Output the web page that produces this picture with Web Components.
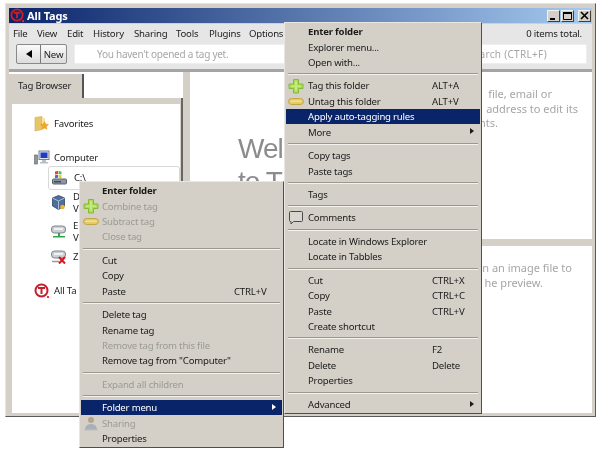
<!DOCTYPE html>
<html>
<head>
<meta charset="utf-8">
<title>All Tags</title>
<style>
html, body { margin: 0; height: 100%; background: #fff; overflow: hidden; }
body { font: 9.6px "Noto Sans", "Liberation Sans", sans-serif; letter-spacing: -.2px; color: #111; position: relative; padding: 3px 0 0 5px; box-sizing: border-box; filter: blur(.45px); }
</style>
</head>
<body>

<app-window heading="All Tags" status="0 items total.">
  <tag-browser slot="left">
    <tree-row icon="folder" label="Favorites" style="margin-top:12px"></tree-row>
    <tree-row icon="computer" label="Computer" style="margin-top:18px"></tree-row>
    <tree-row icon="drive" label="C:\" selected indent></tree-row>
    <tree-row icon="cube" label="D" sub="V" indent></tree-row>
    <tree-row icon="netdrive" label="E" sub="V" indent style="margin-top:3px"></tree-row>
    <tree-row icon="netdown" label="Z" indent style="margin-top:4px"></tree-row>
    <tree-row icon="logo" label="All Ta" style="margin-top:18px"></tree-row>
  </tag-browser>
  <welcome-pane slot="right"></welcome-pane>
</app-window>

<ctx-menu style="left:284px;top:22px;--gutter:22px;width:198px">
  <menu-row label="Enter folder" bold></menu-row>
  <menu-row label="Explorer menu..."></menu-row>
  <menu-row label="Open with..."></menu-row>
  <menu-sep></menu-sep>
  <menu-row label="Tag this folder" key="ALT+A" icon="plus"></menu-row>
  <menu-row label="Untag this folder" key="ALT+V" icon="minus"></menu-row>
  <menu-row label="Apply auto-tagging rules" active></menu-row>
  <menu-row label="More" arrow></menu-row>
  <menu-sep></menu-sep>
  <menu-row label="Copy tags"></menu-row>
  <menu-row label="Paste tags"></menu-row>
  <menu-sep></menu-sep>
  <menu-row label="Tags"></menu-row>
  <menu-sep></menu-sep>
  <menu-row label="Comments" icon="bubble"></menu-row>
  <menu-sep></menu-sep>
  <menu-row label="Locate in Windows Explorer"></menu-row>
  <menu-row label="Locate in Tabbles"></menu-row>
  <menu-sep></menu-sep>
  <menu-row label="Cut" key="CTRL+X"></menu-row>
  <menu-row label="Copy" key="CTRL+C"></menu-row>
  <menu-row label="Paste" key="CTRL+V"></menu-row>
  <menu-row label="Create shortcut"></menu-row>
  <menu-sep></menu-sep>
  <menu-row label="Rename" key="F2"></menu-row>
  <menu-row label="Delete" key="Delete"></menu-row>
  <menu-row label="Properties"></menu-row>
  <menu-sep></menu-sep>
  <menu-row label="Advanced" arrow></menu-row>
</ctx-menu>

<ctx-menu style="left:79px;top:181px;--gutter:21px;width:205px">
  <menu-row label="Enter folder" bold></menu-row>
  <menu-row label="Combine tag" icon="plus" disabled></menu-row>
  <menu-row label="Subtract tag" icon="minus" disabled></menu-row>
  <menu-row label="Close tag" disabled></menu-row>
  <menu-sep></menu-sep>
  <menu-row label="Cut"></menu-row>
  <menu-row label="Copy"></menu-row>
  <menu-row label="Paste" key="CTRL+V"></menu-row>
  <menu-sep></menu-sep>
  <menu-row label="Delete tag"></menu-row>
  <menu-row label="Rename tag"></menu-row>
  <menu-row label="Remove tag from this file" disabled></menu-row>
  <menu-row label="Remove tag from &quot;Computer&quot;"></menu-row>
  <menu-sep></menu-sep>
  <menu-row label="Expand all children" disabled></menu-row>
  <menu-sep></menu-sep>
  <menu-row label="Folder menu" active arrow></menu-row>
  <menu-row label="Sharing" icon="person" disabled></menu-row>
  <menu-row label="Properties"></menu-row>
</ctx-menu>

<script>
const ICONS = {
    logo: `<circle cx="7.5" cy="7.5" r="6" fill="none" stroke="#c3202c" stroke-width="2"/><path d="M4 5h7M7.5 5v6" stroke="#c3202c" stroke-width="2" fill="none"/><rect x="13" y="13" width="2" height="2" fill="#e33"/>`,
    plus: `<path d="M5.5 1.5h5v4.5h4.5v4.5h-4.500v4.500h-5v-4.500h-4.500v-4.500h4.500z" fill="#a9dc55" stroke="#86b83c" stroke-linejoin="round"/><path d="M7 3h2v4.500h4v1.500h-4v4h-2v-4h-4v-1.500h4z" fill="#c4ea7c"/>`,
    minus: `<rect x=".5" y="4.500" width="15" height="6" rx="3" fill="#e3cb68" stroke="#c2a545"/><rect x="2.500" y="6.500" width="11" height="1.500" fill="#f0df94"/>`,
    bubble: `<path d="M2.500 1.500h11a1 1 0 0 1 1 1v8a1 1 0 0 1-1 1h-8l-2.500 2.500v-2.500h-.5a1 1 0 0 1-1-1v-8a1 1 0 0 1 1-1z" fill="#d9d6cf" stroke="#4a4a4a"/>`,
    person: `<circle cx="8" cy="5" r="3" fill="#a08a62"/><path d="M2 15c0-4 2.500-6 6-6s6 2 6 6z" fill="#8f9cae"/><path d="M1 15h14" stroke="#b5b5b5"/>`,
    folder: `<path d="M1 1.500l7-1v13l-7 1.500z" fill="#e8c667" stroke="#c9a850" stroke-width=".6"/><path d="M8 2h3v11h-3z" fill="#f4e2a6"/><path d="M10.500 5.500l1.200 2.700 2.800.3-2.100 1.900.6 2.900-2.500-1.500-2.500 1.500.6-2.900-2.100-1.900 2.800-.3z" fill="#f5a623" stroke="#d88a14" stroke-width=".4"/>`,
    computer: `<rect x="5" y="1" width="10" height="8.500" fill="#dfe3ea" stroke="#7c828c"/><rect x="6.500" y="2.500" width="7" height="5.500" fill="#1a3fc4"/><path d="M8 10h4v2h2v1.500h-8v-1.500h2z" fill="#b9bdc4"/><rect x=".5" y="5" width="3" height="9" fill="#8f959c" stroke="#5e646a" stroke-width=".6"/>`,
    drive: `<path d="M3 1.500l3-.5v3l-3 .5z" fill="#e8432e"/><path d="M6.500 1l3 .5v3l-3-.5z" fill="#6ab53c"/><path d="M3 5.200l3-.5v3l-3 .5z" fill="#2f78d6"/><path d="M6.500 4.700l3 .5v3l-3-.5z" fill="#f3c32d"/><rect x=".5" y="9" width="14" height="5" rx="1" fill="#8c96a0" stroke="#5b6570"/><rect x="2" y="11" width="7" height="1.500" fill="#3f4a55"/>`,
    cube: `<path d="M7.500 .5l6 2.500v8l-6 3.500-6-3.500v-8z" fill="#4f6f98" stroke="#2f4564" stroke-width=".8"/><path d="M1.500 3l6 3 6-3M7.500 6v8.500" stroke="#a9bdd6" fill="none"/><circle cx="11.500" cy="12" r="2.300" fill="#f3b52c"/>`,
    netdrive: `<rect x=".5" y="2" width="14" height="7" rx="3" fill="#ccd0d4" stroke="#7e8388"/><rect x="3" y="4" width="9" height="2" fill="#eef0f2"/><path d="M7 9h2v3h5v1.500h-12v-1.500h5z" fill="#2aa84a"/>`,
    netdown: `<rect x=".5" y="2" width="14" height="7" rx="3" fill="#ccd0d4" stroke="#7e8388"/><rect x="3" y="4" width="9" height="2" fill="#eef0f2"/><path d="M1 12.500h7" stroke="#9a9a9a" stroke-width="1.500"/><path d="M8 8l6 6.500M14 8l-6 6.500" stroke="#d8141c" stroke-width="2"/>`
}

class TbIcon extends HTMLElement{
    connectedCallback(){
        const name = this.getAttribute("name")
        const size = this.getAttribute("size") || 16
        this.attachShadow({mode: "open"}).innerHTML = `
            <style>
            :host{ display: inline-flex; width: ${size}px; height: ${size}px; flex: none; }
            svg{ display: block; }
            </style>
            <svg width="${size}" height="${size}" viewBox="0 0 16 16">${ICONS[name] || ""}</svg>`
    }
}
customElements.define("tb-icon", TbIcon)

class AppWindow extends HTMLElement{
    connectedCallback(){
        const heading = this.getAttribute("heading")
        const status = this.getAttribute("status")
        const items = [["File", 24], ["View", 30], ["Edit", 26], ["History", 41], ["Sharing", 42], ["Tools", 33], ["Plugins", 40], ["Options", 40]]
        this.attachShadow({mode: "open"}).innerHTML = `
            <style>
            :host{
                display: flex; flex-direction: column; box-sizing: border-box;
                width: 591px; height: 414px; padding: 4px 3px 3px 3px;
                background: #d4d0c8;
                border: 1px solid #e6e4de; border-right-color: #5a5a5a; border-bottom-color: #5a5a5a;
            }
            .title{
                height: 15px; flex: none; display: flex; align-items: center; gap: 2px; padding-left: 1px;
                background: linear-gradient(90deg, #0a246a, #a6caf0);
                color: #fff; font-weight: bold; font-size: 11px; letter-spacing: -.1px;
            }
            .title span{ flex: 1; }
            .btns{ display: flex; margin-right: 1px; }
            .btn{
                width: 13px; height: 12px; box-sizing: border-box; background: #d4d0c8;
                border: 1px solid #f4f2ec; border-right-color: #404040; border-bottom-color: #404040;
                color: #000; display: flex; align-items: center; justify-content: center;
            }
            .btn + .btn{ margin-left: 1px; }
            .btn:last-child{ margin-left: 4px; }
            .bars{ background: #e6e6e6; flex: none; height: 45px; margin-top: 1px; border-bottom: 3px solid #a4a4a4; display: flex; flex-direction: column; }
            .menubar{ height: 19px; flex: none; display: flex; align-items: center; padding-left: 4px; color: #222; }
            .menubar b{ font-weight: normal; flex: none; }
            .menubar i{ font-style: normal; margin-left: auto; margin-right: 10px; }
            .toolbar{ flex: 1; display: flex; align-items: flex-start; padding: 1px 5px 0 7px; gap: 7px; }
            .nav{
                width: 51px; height: 20px; box-sizing: border-box; display: flex; border: 1px solid #8a8a8a; border-radius: 2px;
                background: linear-gradient(#fafafa, #dcdcdc);
            }
            .nav div{ display: flex; align-items: center; justify-content: center; }
            .nav .back{ width: 23px; border-right: 1px solid #777; }
            .nav .back::before{ content: ""; border: 4.500px solid transparent; border-right: 6px solid #000; border-left: 0; }
            .nav .new{ flex: 1; color: #222; }
            .field{
                flex: 1; height: 20px; background: #fff; display: flex; align-items: center; justify-content: space-between;
                padding: 0 39px 0 22px; color: #a6a6a6; border: 1px solid #eee; box-sizing: border-box;
                font-size: 10px;
            }
            .field .hint{ letter-spacing: -.25px; }
            .field .find{ letter-spacing: .3px; }
            .main{ flex: 1; min-height: 0; display: grid; grid-template-columns: 174px 1fr; }
            </style>
            <div class="title">
                <tb-icon name="logo" size="15"></tb-icon><span>${heading}</span>
                <div class="btns">
                    <div class="btn"><svg width="9" height="9"><path d="M1 7h5v2H1z"/></svg></div>
                    <div class="btn"><svg width="9" height="9"><path d="M.5 1.500h8v7h-8z" fill="none" stroke="#000"/><path d="M0 1h9v2H0z"/></svg></div>
                    <div class="btn"><svg width="9" height="9"><path d="M1 1l7 7M8 1L1 8" stroke="#000" stroke-width="1.600"/></svg></div>
                </div>
            </div>
            <div class="bars">
                <div class="menubar">${items.map(i => `<b style="width:${i[1]}px">${i[0]}</b>`).join("")}<i>${status}</i></div>
                <div class="toolbar">
                    <div class="nav"><div class="back"></div><div class="new">New</div></div>
                    <div class="field"><span class="hint">You haven't opened a tag yet.</span><span class="find">arch (CTRL+F)</span></div>
                </div>
            </div>
            <div class="main">
                <slot name="left"></slot>
                <slot name="right"></slot>
            </div>`
    }
}
customElements.define("app-window", AppWindow)

class TagBrowser extends HTMLElement{
    connectedCallback(){
        this.attachShadow({mode: "open"}).innerHTML = `
            <style>
            :host{ display: flex; flex-direction: column; min-height: 0; background: #fff; border-top: 2px solid #fff; }
            .tabs{ height: 24px; flex: none; display: flex; }
            .tab{
                width: 75px; box-sizing: border-box; background: #d4d0c8; padding: 5px 0 0 9px;
                border-right: 2px solid #555; color: #222;
            }
            .body{
                flex: 1; min-height: 0; background: #d4d0c8; padding: 6px 1px 0 3px;
                border-right: 2px solid #666; display: flex; flex-direction: column;
            }
            .tree{ flex: 1; background: #fff; display: flex; flex-direction: column; }
            </style>
            <div class="tabs"><div class="tab">Tag Browser</div></div>
            <div class="body"><div class="tree"><slot></slot></div></div>`
    }
}
customElements.define("tag-browser", TagBrowser)

class TreeRow extends HTMLElement{
    connectedCallback(){
        const icon = this.getAttribute("icon")
        const label = this.getAttribute("label")
        const sub = this.getAttribute("sub")
        const indent = this.hasAttribute("indent")
        const selected = this.hasAttribute("selected")
        this.attachShadow({mode: "open"}).innerHTML = `
            <style>
            :host{
                display: flex; align-items: center; gap: 4px; flex: none; color: #222; box-sizing: border-box;
                height: ${selected ? 24 : sub ? 26 : 16}px;
                margin-left: ${indent ? (selected ? 36 : 39) : 22}px;
                padding-left: ${selected ? 3 : 0}px;
                ${selected ? "border: 1px solid #d8d8d8; border-radius: 3px;" : ""}
            }
            .txt{ line-height: 12.500px; margin-left: ${indent ? 2 : 0}px; }
            </style>
            <tb-icon name="${icon}"></tb-icon>
            <div class="txt">${label}${sub ? `<br>${sub}` : ""}</div>`
    }
}
customElements.define("tree-row", TreeRow)

class WelcomePane extends HTMLElement{
    connectedCallback(){
        this.attachShadow({mode: "open"}).innerHTML = `
            <style>
            :host{ display: grid; grid-template-rows: 167px 1fr; margin-left: 7px; min-height: 0; color: #a6a6a6; font-size: 11px; letter-spacing: 0; }
            .top{ background: #fff; position: relative; padding-top: 15px; line-height: 14.500px; text-align: right; }
            .bottom{ background: #fff; border-top: 7px solid #d4d0c8; padding-top: 15px; line-height: 14.500px; text-align: right; }
            .big{
                position: absolute; left: 48px; top: 60px; text-align: left;
                font: 28px/33px "Liberation Sans", sans-serif; letter-spacing: -1px; color: #8c8c8c;
            }
            </style>
            <div class="top">
                <div style="padding-right:40px">file, email or</div>
                <div style="padding-right:14px">address to edit its</div>
                <div style="padding-right:94px">nts.</div>
                <div class="big">Wel<br>to T</div>
            </div>
            <div class="bottom">
                <div style="padding-right:20px">n an image file to</div>
                <div style="padding-right:49px">he preview.</div>
            </div>`
    }
}
customElements.define("welcome-pane", WelcomePane)

class CtxMenu extends HTMLElement{
    constructor(){
        super()
        this.attachShadow({mode: "open"}).innerHTML = `
            <style>
            :host{
                display: block; position: absolute; box-sizing: border-box; padding: 1px;
                background: #d4d0c8; color: #1a1a1a;
                border: 1px solid #e8e6e0; border-right-color: #4e4e4e; border-bottom-color: #4e4e4e;
            }
            </style>
            <slot></slot>`
    }
}
customElements.define("ctx-menu", CtxMenu)

class MenuRow extends HTMLElement{
    connectedCallback(){
        const label = this.getAttribute("label")
        const key = this.getAttribute("key") || ""
        const icon = this.getAttribute("icon")
        const active = this.hasAttribute("active")
        const disabled = this.hasAttribute("disabled")
        const color = active ? "#fff" : disabled ? "#9a9a94" : "inherit"
        this.attachShadow({mode: "open"}).innerHTML = `
            <style>
            :host{
                display: grid; grid-template-columns: var(--gutter) 1fr 48px; align-items: center; height: 15.400px;
                position: relative; white-space: nowrap; color: ${color};
                background: ${active ? "#0a246a" : "transparent"};
                font-weight: ${this.hasAttribute("bold") ? "bold" : "normal"};
            }
            tb-icon{ position: absolute; left: 2px; top: 0; opacity: ${disabled && icon == "person" ? .6 : 1}; }
            .arrow{ position: absolute; right: 6px; top: 4px; border: 3.500px solid transparent; border-left: 4px solid currentColor; border-right: 0; }
            </style>
            <span></span><span>${label}</span><span>${key}</span>
            ${icon ? `<tb-icon name="${icon}"></tb-icon>` : ""}
            ${this.hasAttribute("arrow") ? `<i class="arrow"></i>` : ""}`
    }
}
customElements.define("menu-row", MenuRow)

class MenuSep extends HTMLElement{
    constructor(){
        super()
        this.attachShadow({mode: "open"}).innerHTML = `
            <style>
            :host{ display: flex; align-items: center; height: 8.100px; padding: 0 2px; }
            div{ flex: 1; height: 1px; background: #9c9890; border-bottom: 1px solid #f4f2ec; }
            </style>
            <div></div>`
    }
}
customElements.define("menu-sep", MenuSep)
</script>
</body>
</html>
